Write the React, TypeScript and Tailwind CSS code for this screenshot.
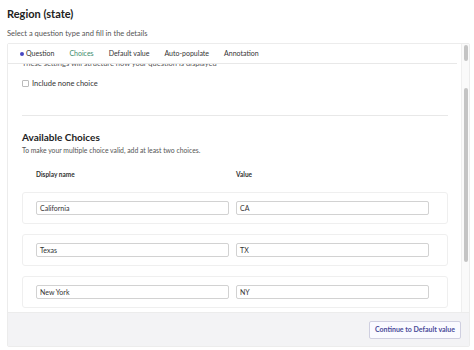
import React from "react";

const choices = [
  { name: "California", value: "CA" },
  { name: "Texas", value: "TX" },
  { name: "New York", value: "NY" },
];

const tabs = ["Question", "Choices", "Default value", "Auto-populate", "Annotation"];

export default function App() {
  return (
    <div
      className="w-[474px] h-[350px] bg-white text-[#2b2b2b] overflow-hidden"
      style={{ fontFamily: "Lato, 'Open Sans', sans-serif" }}
    >
      <div className="pl-[7px] pt-[7px]">
        <h1 className="text-[11px] leading-[14px] font-bold text-[#222]">Region (state)</h1>
        <p className="mt-[8px] text-[7.5px] leading-[10px] text-[#555]">
          Select a question type and fill in the details
        </p>
      </div>

      <div className="ml-[7px] mt-[4px] w-[463px] h-[304px] border border-[#ececec] rounded-[2px] flex flex-col">
        <div className="flex flex-1 min-h-0">
          <div className="flex-1 flex flex-col min-w-0 border-r border-[#efefef]">
            {/* tabs */}
            <div className="h-[20px] shrink-0 flex items-center gap-[15px] pl-[12px] border-b border-[#e8e8e8] mr-[4px] text-[7px] text-[#333] relative z-10 bg-white">
              {tabs.map((t) => (
                <span
                  key={t}
                  className={
                    t === "Choices"
                      ? "text-[#3c8c6b] flex items-center"
                      : "flex items-center"
                  }
                >
                  {t === "Question" && (
                    <span className="w-[4px] h-[4px] rounded-full bg-[#4747c2] mr-[2px]" />
                  )}
                  {t}
                </span>
              ))}
            </div>

            {/* scrolled content */}
            <div className="flex-1 min-h-0 overflow-hidden pl-[14px] pr-[13px]">
              <p className="-mt-[5px] text-[7.5px] leading-[10px] text-[#555]">
                These settings will structure how your question is displayed
              </p>
              <label className="mt-[9px] flex items-center gap-[3px] text-[7.5px] text-[#333]">
                <span className="w-[7px] h-[7px] border border-[#bbb] rounded-[1px] bg-white" />
                Include none choice
              </label>
              <div className="mt-[26px] border-t border-[#e8e8e8]" />

              <h2 className="mt-[15px] text-[10px] leading-[12px] font-bold text-[#222]">
                Available Choices
              </h2>
              <p className="mt-[2px] text-[6.8px] leading-[10px] text-[#555]">
                To make your multiple choice valid, add at least two choices.
              </p>

              <div className="mt-[15px] flex pl-[14px] gap-[7px] text-[6.5px] leading-[10px] font-bold text-[#333]">
                <span className="w-[193px]">Display name</span>
                <span>Value</span>
              </div>

              <div className="mt-[12px] flex flex-col gap-[10px]">
                {choices.map((c) => (
                  <div
                    key={c.name}
                    className="h-[32px] border border-[#efefef] rounded-[3px] flex items-center pl-[13px] gap-[7px]"
                  >
                    <div className="w-[193px] h-[14px] border border-[#d2d2d2] rounded-[2px] flex items-center px-[3px] text-[7px] text-[#333]">
                      {c.name}
                    </div>
                    <div className="w-[193px] h-[14px] border border-[#d2d2d2] rounded-[2px] flex items-center px-[3px] text-[7px] text-[#333]">
                      {c.value}
                    </div>
                  </div>
                ))}
              </div>
            </div>
          </div>

          {/* scrollbar */}
          <div className="w-[7px] shrink-0 flex flex-col items-center pt-[1px] bg-[#fafafa]">
            <div className="w-[4px] h-[16px] rounded-[2px] bg-[#c4c4c4]" />
            <div className="mt-[27px] w-[4px] h-[174px] rounded-[2px] bg-[#c4c4c4]" />
          </div>
        </div>

        {/* footer */}
        <div className="h-[34px] shrink-0 bg-[#f3f3f5] border-t border-[#ececec] flex items-center justify-end pr-[8px]">
          <button className="h-[18px] px-[5px] border border-[#cfcfe0] rounded-[2px] bg-[#fafaff] text-[7px] font-bold text-[#4a4a99]">
            Continue to Default value
          </button>
        </div>
      </div>
    </div>
  );
}
